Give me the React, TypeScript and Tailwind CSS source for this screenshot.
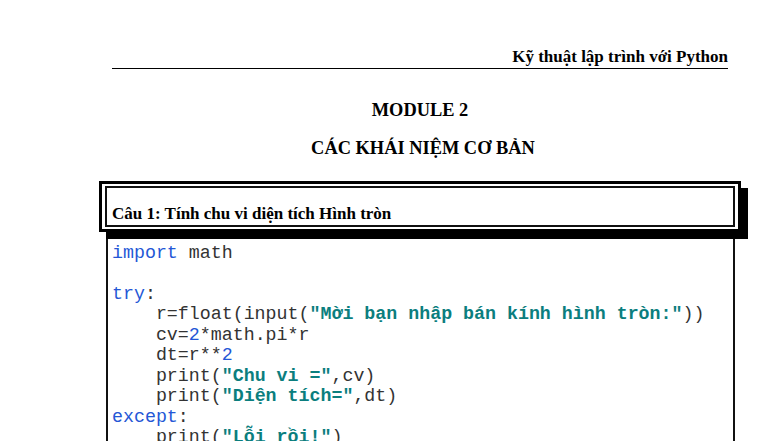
const serif = { fontFamily: '"Liberation Serif", "Times New Roman", serif' };

type Tok = [string, string?];

const kw = "text-[#2457d6]";
const str = "text-[#0b7e7e] font-bold";

const lines: Tok[][] = [
  [["import", kw], [" math"]],
  [],
  [["try", kw], [":"]],
  [["    r=float(input("], ['"Mời bạn nhập bán kính hình tròn:"', str], ["))"]],
  [["    cv="], ["2", kw], ["*math.pi*r"]],
  [["    dt=r**"], ["2", kw]],
  [["    print("], ['"Chu vi ="', str], [",cv)"]],
  [["    print("], ['"Diện tích="', str], [",dt)"]],
  [["except", kw], [":"]],
  [["    print("], ['"Lỗi rồi!"', str], [")"]],
];

export default function App() {
  return (
    <div className="w-[784px] h-[441px] overflow-hidden bg-white text-black">
      {/* running header */}
      <div className="ml-[112px] w-[616px] pt-[47px]">
        <div
          className="text-right text-[17px] leading-[19px] font-bold pb-[2px] border-b border-black"
          style={serif}
        >
          Kỹ thuật lập trình với Python
        </div>
      </div>

      <div className="ml-[112px] w-[616px] text-center font-bold text-[18.4px] leading-[22px]" style={serif}>
        <div className="mt-[30px]">MODULE 2</div>
        <div className="mt-[16px] pl-[6px]">CÁC KHÁI NIỆM CƠ BẢN</div>
      </div>

      {/* question box */}
      <div className="ml-[99px] mt-[22px] w-[642px] h-[51px] border-[3px] border-black px-[3px] py-[2px] shadow-[7px_7px_0_#000] bg-white">
        <div className="h-full border-2 border-[#111] flex items-end pl-[5px] pb-[1px]">
          <span className="text-[17px] leading-[20px] font-bold" style={serif}>
            Câu 1: Tính chu vi diện tích Hình tròn
          </span>
        </div>
      </div>

      {/* code */}
      <div className="ml-[106px] mt-[7px] w-[629px] h-[300px] border-x-2 border-[#111] pl-[4px] pt-[4px]">
        <pre
          className="text-[18.3px] leading-[20.45px] text-[#333]"
          style={{ fontFamily: '"Liberation Mono", "Courier New", monospace' }}
        >
          {lines.map((l, i) => (
            <div key={i} className="h-[20.45px]">
              {l.map(([t, c], j) => (
                <span key={j} className={c}>
                  {t}
                </span>
              ))}
            </div>
          ))}
        </pre>
      </div>
    </div>
  );
}
